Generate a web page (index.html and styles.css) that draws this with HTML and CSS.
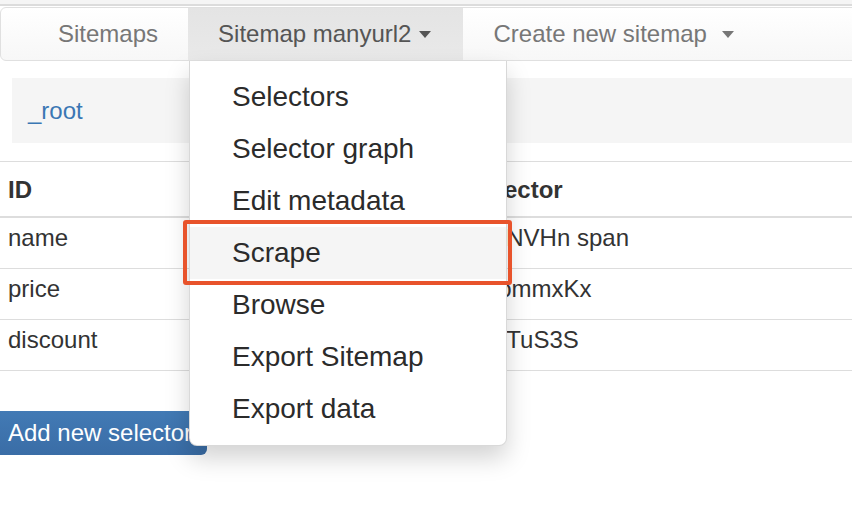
FILE: index.html
```html
<!DOCTYPE html>
<html lang="en">
<head>
<meta charset="utf-8">
<title>Web Scraper</title>
<link rel="stylesheet" href="styles.css">
</head>
<body>
<div class="topstrip"></div>
<nav class="navbar">
  <ul class="nav">
    <li class="nav-item">Sitemaps</li>
    <li class="nav-item active">Sitemap manyurl2<span class="caret"></span>
      <ul class="dropdown">
        <li class="dd-item">Selectors</li>
        <li class="dd-item">Selector graph</li>
        <li class="dd-item">Edit metadata</li>
        <li class="dd-item hover highlight">Scrape</li>
        <li class="dd-item">Browse</li>
        <li class="dd-item">Export Sitemap</li>
        <li class="dd-item">Export data</li>
      </ul>
    </li>
    <li class="nav-item">Create new sitemap <span class="caret light"></span></li>
  </ul>
</nav>
<div class="breadcrumb"><a class="crumb" href="#">_root</a></div>
<table class="selectors">
  <thead>
    <tr><th class="col-id">ID</th><th class="col-selector">Selector</th></tr>
  </thead>
  <tbody>
    <tr><td>name</td><td>div._2NVHn span</td></tr>
    <tr><td>price</td><td>div._lommxKx</td></tr>
    <tr><td>discount</td><td>div._3TuS3S</td></tr>
  </tbody>
</table>
<div class="actions"><span class="btn-primary">Add new selector</span></div>
</body>
</html>
```

FILE: styles.css
```css
html, body {
  margin: 0;
  padding: 0;
  overflow: hidden;
  background: #fff;
}
body {
  font-family: "Liberation Sans", Arial, sans-serif;
  color: #333;
  width: 852px;
  height: 510px;
}
.topstrip {
  height: 4px;
  background: #f5f5f5;
  border-bottom: 2px solid #dcdcdc;
  margin-bottom: 1px;
}
.navbar {
  height: 52px;
  border: 1px solid #e0e0e0;
  border-radius: 6px;
  background: linear-gradient(#ffffff, #f7f7f7);
  margin-right: -20px;
}
.nav {
  list-style: none;
  margin: 0 0 0 27px;
  padding: 0;
  display: flex;
}
.nav-item {
  position: relative;
  padding: 0 30px;
  line-height: 52px;
  font-size: 24px;
  color: #777;
  white-space: nowrap;
}
.nav-item.active {
  padding-right: 32px;
  background: linear-gradient(#e4e4e4, #e9e9e9);
  color: #555;
}
.caret {
  display: inline-block;
  width: 0;
  height: 0;
  border-top: 7px solid #555;
  border-left: 6.5px solid transparent;
  border-right: 6.5px solid transparent;
  vertical-align: middle;
  margin-left: 8px;
  margin-top: -2px;
}
.caret.light {
  border-top-color: #777;
  margin-left: 8px;
}
.dropdown {
  position: absolute;
  top: calc(100% + 1px);
  left: 1px;
  width: 316px;
  margin: 0;
  padding: 10px 0;
  list-style: none;
  background: #fff;
  border: 1px solid rgba(0, 0, 0, 0.15);
  border-top: none;
  border-radius: 0 0 8px 8px;
  box-shadow: 0 12px 24px rgba(0, 0, 0, 0.175);
  z-index: 10;
}
.dd-item {
  position: relative;
  padding: 0 42px;
  line-height: 52px;
  font-size: 28px;
  color: #2b2b2b;
  white-space: nowrap;
}
.dd-item.hover {
  background: #f5f5f5;
}
.dd-item.highlight::after {
  content: "";
  position: absolute;
  left: -7px;
  right: -6px;
  top: -7px;
  bottom: -6px;
  border: 4px solid #e8532b;
  border-radius: 3px;
}
.breadcrumb {
  margin: 17px -20px 0 12px;
  height: 65px;
  line-height: 65px;
  padding-left: 16px;
  background: #f5f5f5;
  font-size: 24px;
}
.crumb {
  color: #3a77b4;
  text-decoration: none;
}
.selectors {
  margin-top: 18px;
  width: 100%;
  border-collapse: collapse;
  font-size: 24px;
  border-top: 1px solid #ddd;
}
.selectors th {
  text-align: left;
  font-weight: bold;
  padding: 11px 8px 9px;
  line-height: 34px;
  border-bottom: 2px solid #ddd;
}
.selectors th.col-id {
  width: 420px;
}
.selectors th.col-selector {
  padding-left: 32px;
}
.selectors td {
  padding: 3px 8px 13px;
  line-height: 34px;
  border-bottom: 1px solid #ddd;
  white-space: nowrap;
}
.actions {
  margin-top: 40px;
}
.btn-primary {
  display: inline-block;
  margin-left: -7px;
  padding: 0 15px;
  height: 44px;
  line-height: 44px;
  font-size: 24px;
  color: #fff;
  background: linear-gradient(#427ab5, #3a6da6);
  border-radius: 6px;
}
```
